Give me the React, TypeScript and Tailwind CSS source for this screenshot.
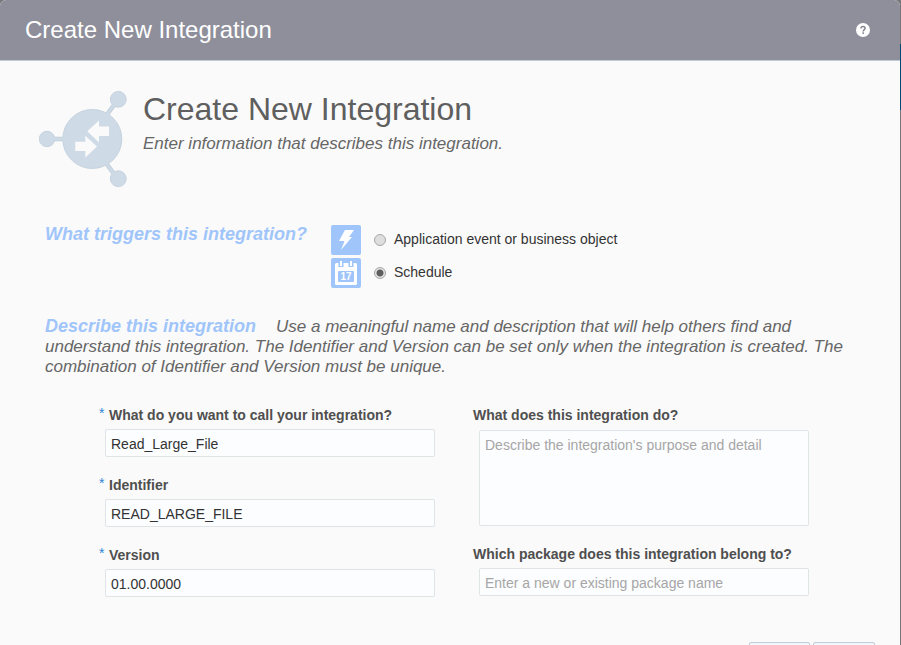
import { useState } from "react";

type Trigger = "event" | "schedule";

interface FieldProps {
  id: string;
  label: string;
  value: string;
  onChange: (value: string) => void;
  placeholder?: string;
  required?: boolean;
}

const inputClass =
  "block w-full rounded-xs border border-[#dfe4e7] bg-[#fcfdff] px-[5px] text-sm text-[#333333] placeholder:text-[#a6a6a6] focus:border-[#9fc5f8] focus:outline-none";

function FieldLabel({ id, label, required = false }: { id: string; label: string; required?: boolean }) {
  return (
    <label htmlFor={id} className="flex text-sm leading-5 font-bold text-[#4f4f4f]">
      {required && <span className="w-2.5 shrink-0 text-sm leading-4 font-normal text-[#2f86d8]">*</span>}
      {label}
    </label>
  );
}

function Field({ id, label, value, onChange, placeholder, required = false }: FieldProps) {
  return (
    <div>
      <FieldLabel id={id} label={label} required={required} />
      <div className="pt-1 pl-1.5">
        <input
          id={id}
          type="text"
          value={value}
          placeholder={placeholder}
          required={required}
          onChange={(e) => onChange(e.target.value)}
          className={`${inputClass} h-7 pt-0.5`}
        />
      </div>
    </div>
  );
}

function IntegrationIcon() {
  return (
    <svg width="90" height="98" viewBox="0 0 90 98" className="shrink-0" aria-hidden="true">
      <g stroke="#c3d2de" strokeWidth="4.6">
        <path d="M14 49H26M67 26L75 15M67 73L75 84" />
      </g>
      <g fill="#cedae6" stroke="#c5d3df" strokeWidth="1">
        <circle cx="8" cy="49" r="7.7" />
        <circle cx="79.300" cy="9.300" r="7.9" />
        <circle cx="79.300" cy="88.700" r="7.9" />
        <circle cx="53.300" cy="49" r="29.500" />
      </g>
      <path d="M14 49H26M67 26L75 15M67 73L75 84" stroke="#cedae6" strokeWidth="2.600" />
      <path d="M48.300 41.300L60 30.500V36.500H70V46H60V52.500Z" fill="#fafafa" />
      <path d="M58 56.500L46.300 45.700V51.700H36.300V61H46.300V67.500Z" fill="#fafafa" />
    </svg>
  );
}

function LightningIcon() {
  return (
    <svg width="30" height="30" viewBox="0 0 30 30" aria-hidden="true">
      <rect width="30" height="30" rx="2" fill="#a0c5fa" />
      <path d="M14 5H23L18 12H21L10 25L13.500 16H8Z" fill="#fff" />
    </svg>
  );
}

function CalendarIcon() {
  return (
    <svg width="30" height="30" viewBox="0 0 30 30" aria-hidden="true">
      <rect width="30" height="30" rx="2" fill="#a0c5fa" />
      <rect x="4" y="5" width="22" height="22" rx="1.500" fill="#fff" />
      <path d="M7.500 3H12.500V9H7.500ZM17.500 3H22.500V9H17.500Z" fill="#a0c5fa" />
      <path d="M9 3H11V8H9ZM19 3H21V8H19Z" fill="#fff" />
      <rect x="7" y="13" width="16" height="11" rx="1" fill="#a0c5fa" />
      <text
        x="15"
        y="22"
        textAnchor="middle"
        fontSize="10"
        fontWeight="700"
        fill="#fff"
        fontFamily="'Liberation Sans', sans-serif"
      >
        17
      </text>
    </svg>
  );
}

const triggers: { id: Trigger; label: string; icon: React.ReactNode }[] = [
  { id: "event", label: "Application event or business object", icon: <LightningIcon /> },
  { id: "schedule", label: "Schedule", icon: <CalendarIcon /> },
];

export default function App() {
  const [trigger, setTrigger] = useState<Trigger>("schedule");
  const [name, setName] = useState("Read_Large_File");
  const [identifier, setIdentifier] = useState("READ_LARGE_FILE");
  const [version, setVersion] = useState("01.00.0000");
  const [description, setDescription] = useState("");
  const [packageName, setPackageName] = useState("");

  return (
    <div className="flex h-screen overflow-hidden bg-[#77777a] font-['Liberation_Sans',Arial,sans-serif]">
      <div role="dialog" aria-labelledby="dialog-title" className="min-w-0 flex-1 rounded-t-md bg-[#fafafa]">
        <header className="flex h-[61px] items-center justify-between rounded-t-md border-b border-[#bfccd6] bg-[#8e8f9b] pr-[30px] pl-[25px]">
          <h1 id="dialog-title" className="text-2xl text-white">
            Create New Integration
          </h1>
          <button type="button" aria-label="Help" className="flex">
            <svg width="14" height="14" viewBox="0 0 14 14" aria-hidden="true">
              <circle cx="7" cy="7" r="7" fill="#fff" />
              <path
                d="M5 5.500C5 4 6 3.400 7 3.400S9.100 4 9.100 5.300C9.100 6.600 7.200 6.700 7.200 8.400"
                fill="none"
                stroke="#858692"
                strokeWidth="1.500"
              />
              <rect x="6.400" y="9.300" width="1.600" height="1.600" fill="#858692" />
            </svg>
          </button>
        </header>

        <form onSubmit={(e) => e.preventDefault()}>
          <div className="flex gap-3.5 pt-[29px] pl-[39px]">
            <IntegrationIcon />
            <div>
              <h2 className="text-[32px] leading-[38px] text-[#5f5f5f]">Create New Integration</h2>
              <p className="pt-1.5 text-[17px] leading-5 text-[#666666] italic">
                Enter information that describes this integration.
              </p>
            </div>
          </div>

          {/* Trigger */}
          <fieldset className="flex pt-[37px] pl-[45px]">
            <div className="w-[286px] shrink-0">
              <h3 id="trigger-title" className="text-lg leading-[18px] font-bold text-[#a0c5fa] italic">
                What triggers this integration?
              </h3>
            </div>
            <div role="radiogroup" aria-labelledby="trigger-title" className="flex flex-col gap-[3px]">
              {triggers.map((item) => (
                <div key={item.id} className="flex items-center">
                  {item.icon}
                  <input
                    type="radio"
                    name="trigger"
                    id={`trigger-${item.id}`}
                    checked={trigger === item.id}
                    onChange={() => setTrigger(item.id)}
                    className="ml-[13px] size-3 appearance-none rounded-full border border-[#a8a8a8] bg-[#dedede] checked:bg-[radial-gradient(circle,#5e5e5e_3px,#e4e4e4_4px)]"
                  />
                  <label htmlFor={`trigger-${item.id}`} className="pb-0.5 pl-2 text-sm text-[#333333]">
                    {item.label}
                  </label>
                </div>
              ))}
            </div>
          </fieldset>

          {/* Details */}
          <p className="pt-7 pr-[50px] pl-[45px] text-[17px] leading-5 text-[#666666] italic">
            <strong className="mr-5 text-lg leading-5 font-bold text-[#a0c5fa]">Describe this integration</strong>
            Use a meaningful name and description that will help others find and understand this integration. The
            Identifier and Version can be set only when the integration is created. The combination of Identifier and
            Version must be unique.
          </p>

          <div className="grid grid-cols-2 gap-x-[38px] pt-7 pr-[91px] pl-[99px]">
            <div className="flex flex-col gap-[18px]">
              <Field
                id="name"
                label="What do you want to call your integration?"
                value={name}
                onChange={setName}
                required
              />
              <Field id="identifier" label="Identifier" value={identifier} onChange={setIdentifier} required />
              <Field id="version" label="Version" value={version} onChange={setVersion} required />
            </div>
            <div className="flex flex-col gap-[18px]">
              <div>
                <FieldLabel id="description" label="What does this integration do?" />
                <div className="pt-[5px] pl-1.5">
                  <textarea
                    id="description"
                    value={description}
                    placeholder="Describe the integration's purpose and detail"
                    onChange={(e) => setDescription(e.target.value)}
                    className={`${inputClass} h-24 resize-none pt-1`}
                  />
                </div>
              </div>
              <Field
                id="package"
                label="Which package does this integration belong to?"
                value={packageName}
                onChange={setPackageName}
                placeholder="Enter a new or existing package name"
              />
            </div>
          </div>

          <footer className="flex justify-end gap-[3px] pt-[45px] pr-[25px]">
            <button
              type="button"
              aria-label="Cancel"
              className="h-7 w-[61px] rounded-xs border border-[#c0cdd8] bg-[#f3f6f9]"
            />
            <button
              type="submit"
              aria-label="Create"
              className="h-7 w-[62px] rounded-xs border border-[#c0cdd8] bg-[#f3f6f9]"
            />
          </footer>
        </form>
      </div>

      {/* Sliver of the page behind the dialog */}
      <div className="w-px shrink-0 pt-11">
        <div className="h-[66px] bg-[#004a73]" />
      </div>
    </div>
  );
}
